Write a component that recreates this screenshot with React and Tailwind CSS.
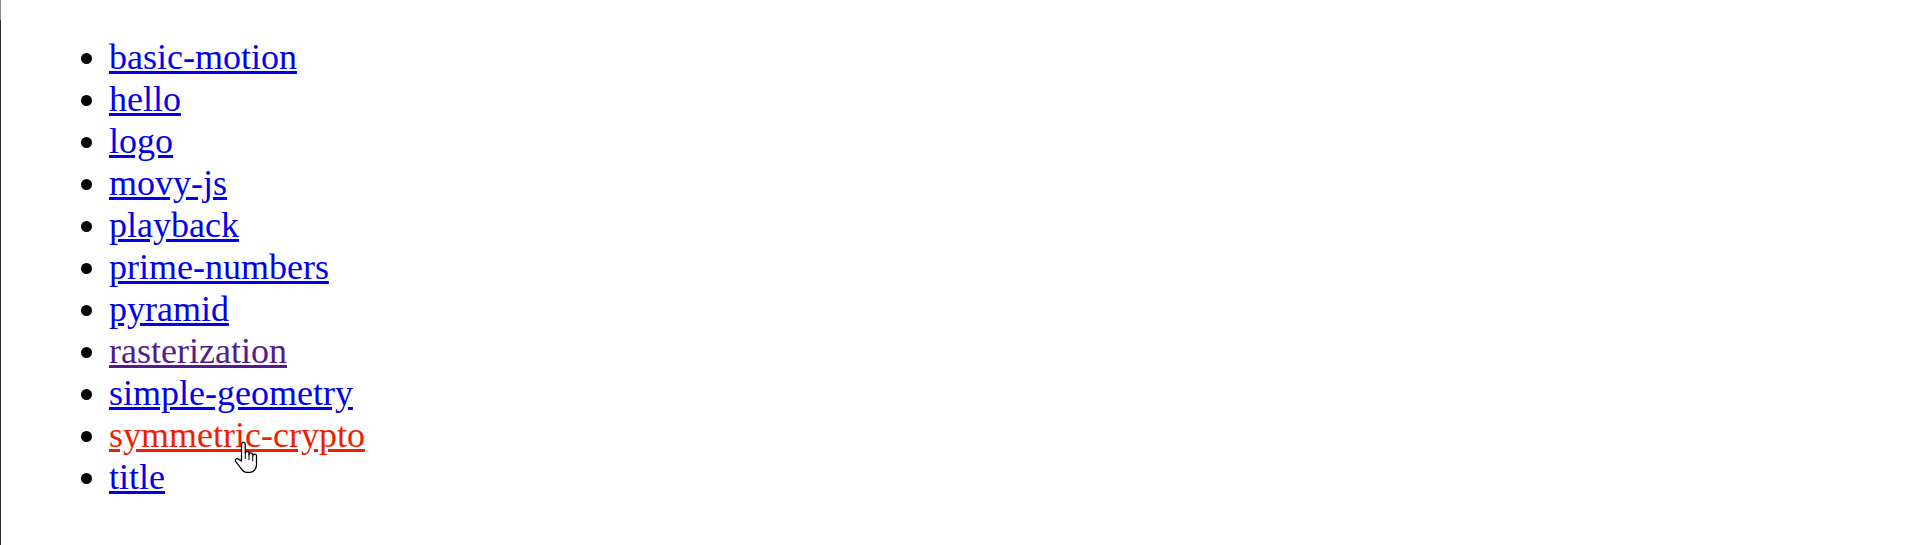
// App.jsx
const examples = [
  { name: 'basic-motion', state: 'link' },
  { name: 'hello', state: 'link' },
  { name: 'logo', state: 'link' },
  { name: 'movy-js', state: 'link' },
  { name: 'playback', state: 'link' },
  { name: 'prime-numbers', state: 'link' },
  { name: 'pyramid', state: 'link' },
  { name: 'rasterization', state: 'visited' },
  { name: 'simple-geometry', state: 'link' },
  { name: 'symmetric-crypto', state: 'active' },
  { name: 'title', state: 'link' },
];

const linkColor = {
  link: 'text-[#0000ee] decoration-[#0000ee]',
  visited: 'text-[#551a8b] decoration-[#551a8b]',
  active: 'text-[#f01e00] decoration-[#f01e00]',
};

// Hand pointer drawn over the hovered link
const HandCursor = () => (
  <svg
    className="absolute left-[234px] top-[441px] w-[25px] h-[35px] pointer-events-none"
    viewBox="0 0 20 28"
    fill="none"
  >
    <path
      d="M6 2.5a1.5 1.5 0 0 1 3 0V10a1.5 1.5 0 0 1 3 0v1a1.5 1.5 0 0 1 3 0v1a1.5 1.5 0 0 1 3 0v7c0 3-2 6-5 6h-3c-2 0-3-1-4-2.5L1.5 16.5a1.4 1.4 0 0 1 2-2L6 16Z"
      fill="#fff"
      stroke="#000"
      strokeWidth="1"
      strokeLinejoin="round"
    />
    <path d="M9 10v4M12 11v4M15 12v4" stroke="#000" strokeWidth="0.8" strokeLinecap="round" />
  </svg>
);

function App() {
  return (
    <div className="relative flex w-[1920px] h-[545px] bg-white font-['Liberation_Serif','Times_New_Roman',serif] text-black">
      {/* window edge */}
      <div className="flex flex-col w-px shrink-0">
        <div className="h-5 bg-[#8a8a8a]" />
        <div className="flex-1 bg-[#2b2b2b]" />
      </div>
      <div className="flex-1 pl-[17px]">
        <ul className="list-disc mt-[36px] pl-[91px] text-[36px] leading-[42px]">
          {examples.map((ex) => (
            <li key={ex.name}>
              <a href={`#${ex.name}`} className={`underline ${linkColor[ex.state]}`}>
                {ex.name}
              </a>
            </li>
          ))}
        </ul>
      </div>
      <HandCursor />
    </div>
  );
}

export default App;
